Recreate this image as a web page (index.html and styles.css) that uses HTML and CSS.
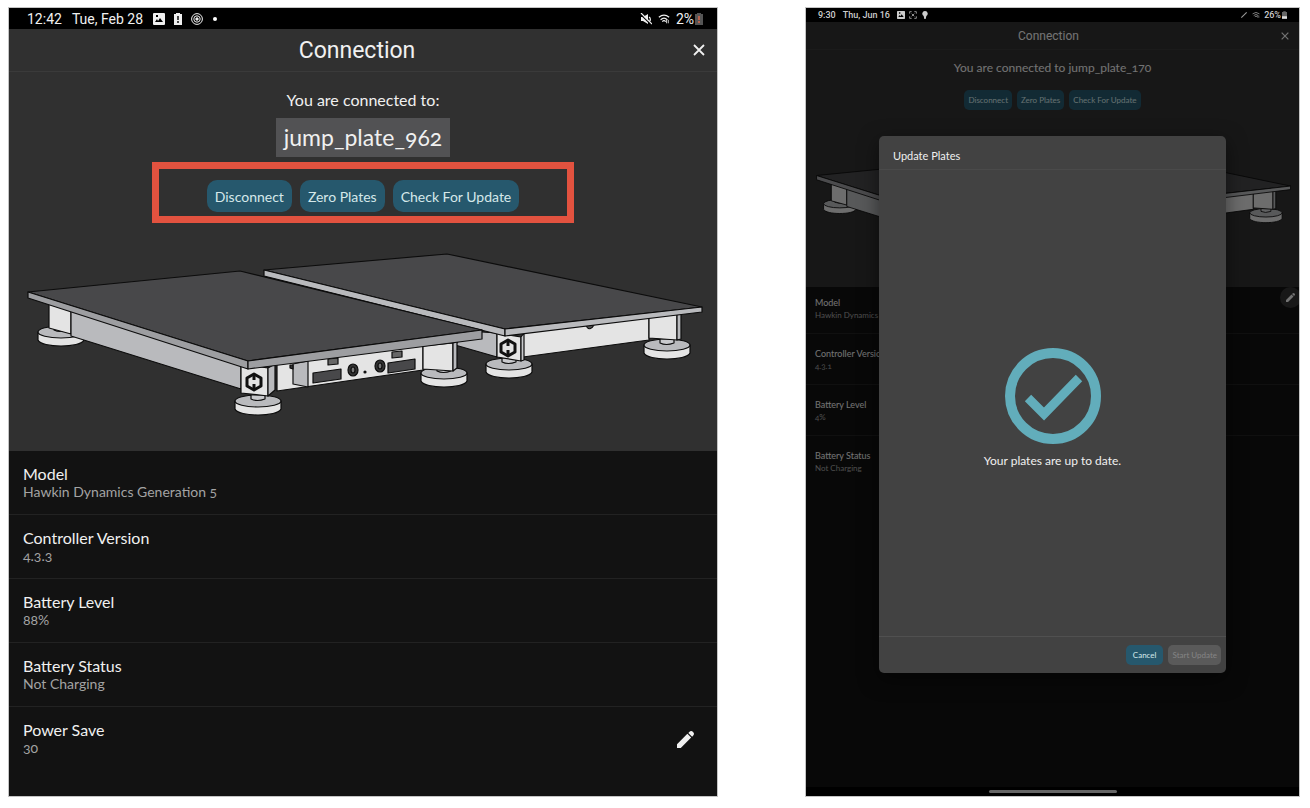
FILE: index.html
```
<!DOCTYPE html>
<html lang="en">
<head>
  <meta charset="UTF-8" />
  <meta name="viewport" content="width=device-width, initial-scale=1.0"/>
  <title>Connection</title>
  <link rel="stylesheet" href="styles.css">
</head>
<body>
  <!-- shared drawings -->
  <svg class="defs" width="0" height="0" aria-hidden="true">
    <symbol id="foot" viewBox="-25 -10 50 24" overflow="visible">
      <path d="M-23 0v8c3 8 43 8 46 0v-8z" fill="#e4e4e4"/>
      <ellipse rx="23" ry="6" fill="#b9babd"/>
      <path d="M-7 -6v4q6 3 14 0v-4z" fill="#c9cacd"/>
    </symbol>
    <symbol id="hex" viewBox="-10 -10 20 20" overflow="visible">
      <path d="M0-8l7 4v8l-7 4l-7-4v-8z" fill="none" stroke="#111" stroke-width="3"/>
      <path d="M0-7v5M0 2v5" fill="none" stroke="#111" stroke-width="3"/>
    </symbol>
    <g id="plates" stroke="#0c0c0c" stroke-width="1.2" stroke-linejoin="round">
      <!-- right plate -->
      <use href="#foot" x="484" y="354" width="50" height="24"/>
      <use href="#foot" x="642" y="335" width="50" height="24"/>
      <path d="M455 345l42 12v-24l-30-2z" fill="#b9babd"/>
      <path d="M523 330l126-14v24l-126 17z" fill="#e4e4e4"/>
      <path d="M586 326q4 6 8-1" fill="#555"/>
      <path d="M649 317l28-5v28l-28-2z" fill="#e4e4e4"/>
      <path d="M677 312l4 0v27l-4 1z" fill="#b9babd"/>
      <path d="M497 333l24 4v24l-24-4z" fill="#e4e4e4"/>
      <path d="M521 337l3-4v27l-3 1z" fill="#c9cacd"/>
      <path d="M264 270l183-16 255 53-197 22z" fill="#48484a"/>
      <path d="M264 270l241 59v7l-241-60z" fill="#b9babd"/>
      <path d="M505 329l197-22v5l-197 24z" fill="#b9babd"/>
      <use href="#hex" x="498" y="338" width="20" height="20"/>
      <!-- left plate -->
      <use href="#foot" x="36" y="322" width="50" height="24"/>
      <use href="#foot" x="419" y="363" width="50" height="24"/>
      <use href="#foot" x="233" y="391" width="50" height="24"/>
      <path d="M49 303l22 6v25l-22-6z" fill="#e4e4e4"/>
      <path d="M71 310l170 54v25l-170-53z" fill="#b9babd"/>
      <path d="M277 362l146-17v25l-146 21z" fill="#e4e4e4"/>
      <path d="M293 364l15-3v26l-15-3z" fill="#b9babd"/>
      <path d="M290 365l3 0v4l-3-1z" fill="#333"/>
      <path d="M328 359l10-1v6l-10 1zM392 352l10-1v6l-10 1z" fill="#666"/>
      <path d="M313 373l28-4v10l-28 4zM388 363l27-4v10l-27 4z" fill="#48484a"/>
      <ellipse cx="353" cy="370" rx="5" ry="6" fill="#333"/>
      <ellipse cx="353" cy="370" rx="2" ry="3" fill="#777"/>
      <ellipse cx="380" cy="366" rx="5" ry="6" fill="#333"/>
      <ellipse cx="380" cy="366" rx="2" ry="3" fill="#777"/>
      <circle cx="365" cy="372" r="1"/>
      <path d="M423 346l30-3v28l-30-2z" fill="#e4e4e4"/>
      <path d="M453 343l4-1v26l-4 3z" fill="#b9babd"/>
      <path d="M241 364l27 4v28l-27-3z" fill="#e4e4e4"/>
      <path d="M268 368l7-4v26l-7 6z" fill="#b9babd"/>
      <path d="M28 292l212-21 242 59-234 31z" fill="#48484a"/>
      <path d="M28 292l220 69v8l-220-71z" fill="#9d9ea1"/>
      <path d="M248 361l234-31v9l-234 30z" fill="#9d9ea1"/>
      <use href="#hex" x="244" y="372" width="20" height="20"/>
    </g>
    <symbol id="photo" viewBox="0 0 12 12">
      <path d="M1 0h10a1 1 0 0 1 1 1v10a1 1 0 0 1-1 1H1a1 1 0 0 1-1-1V1a1 1 0 0 1 1-1zM2 9h8L7 5 5 8 4 6zM3 2v2h2V2z" fill="currentColor" fill-rule="evenodd"/>
    </symbol>
    <symbol id="wifi" viewBox="0 0 14 12">
      <path d="M1 4q6-5 12 0M3 7q4-4 8 0M5 9q2-2 4 0" fill="none" stroke="currentColor" stroke-width="1.4"/>
      <path d="M10 7v4M12 7v4" stroke="currentColor"/>
    </symbol>
    <symbol id="close" viewBox="0 0 12 12">
      <path d="M1 1l10 10M11 1L1 11" stroke="currentColor" stroke-width="1.8"/>
    </symbol>
    <symbol id="pencil" viewBox="0 0 18 18">
      <path d="M0 18v-4L11 3l4 4L4 18zM12 2l1-1q2-2 4 0t0 4l-1 1z" fill="currentColor"/>
    </symbol>
  </svg>

  <section class="tablet">
    <div class="status">
      <span>12:42</span>
      <span>Tue, Feb 28</span>
      <svg class="status-icon"><use href="#photo"/></svg>
      <svg class="status-icon" viewBox="0 0 12 12"><path d="M4 0h4v1h2v11H2V1h2z" fill="currentColor"/><path d="M6 3v4M6 8v2" stroke="#000" stroke-width="1.4"/></svg>
      <svg class="status-icon" viewBox="0 0 12 12" fill="none" stroke="currentColor"><circle cx="6" cy="6" r="5.4"/><circle cx="6" cy="6" r="3.2"/><circle cx="6" cy="6" r="1.2" fill="currentColor"/></svg>
      <span class="dot"></span>
      <div class="status-right">
        <svg class="status-icon" viewBox="0 0 12 12"><path d="M1 4h2l5-3v10L3 8H1z" fill="currentColor"/><path d="M0 1l11 10.500" stroke="#000" stroke-width="1.2"/><path d="M1 0l11 11M9 4q2 1 1 4" fill="none" stroke="currentColor" stroke-width="1.2"/></svg>
        <svg class="status-icon"><use href="#wifi"/></svg>
        <span class="level">2%<svg class="battery" viewBox="0 0 8 12"><path d="M2 0h4v1h2v11H0V1h2z" fill="#555"/><path d="M4 3v4M4 8v2" stroke="#d0654a" stroke-width="1.6"/></svg></span>
      </div>
    </div>
    <header class="title-bar">
      <h1>Connection</h1>
      <button class="close" aria-label="Close"><svg><use href="#close"/></svg></button>
    </header>
    <div class="hero">
      <p class="connected">You are connected to:</p>
      <p class="plate-name">jump_plate_962</p>
      <div class="actions marked">
        <button class="btn">Disconnect</button>
        <button class="btn">Zero Plates</button>
        <button class="btn">Check For Update</button>
      </div>
      <svg class="drawing" viewBox="9 223 708 228" role="img" aria-label="Force plates"><use href="#plates"/></svg>
    </div>
    <ul class="info">
      <li><div><h2>Model</h2><p>Hawkin Dynamics Generation 5</p></div></li>
      <li><div><h2>Controller Version</h2><p>4.3.3</p></div></li>
      <li><div><h2>Battery Level</h2><p>88%</p></div></li>
      <li><div><h2>Battery Status</h2><p>Not Charging</p></div></li>
      <li><div><h2>Power Save</h2><p>30</p></div>
        <button class="edit" aria-label="Edit power save"><svg><use href="#pencil"/></svg></button></li>
    </ul>
  </section>

  <section class="tablet small">
    <div class="status">
      <span>9:30</span>
      <span>Thu, Jun 16</span>
      <svg class="status-icon"><use href="#photo"/></svg>
      <svg class="status-icon" viewBox="0 0 12 12" fill="none" stroke="#999" stroke-width="1.4"><path d="M1 4V1h3M8 1h3v3M11 8v3H8M4 11H1V8M4 4l4 4M8 4L4 8"/></svg>
      <svg class="status-icon" viewBox="0 0 12 12" fill="currentColor"><path d="M6 0a4 4 0 0 1 2 7.500L7 12H5L4 7.500A4 4 0 0 1 6 0z"/></svg>
      <div class="status-right">
        <svg class="status-icon" viewBox="0 0 12 12"><path d="M2 10l8-8" stroke="#999" stroke-width="1.6"/></svg>
        <svg class="status-icon muted"><use href="#wifi"/></svg>
        <span class="level">26%<svg class="battery" viewBox="0 0 8 12"><path d="M2 0h4v1h2v11H0V1h2z" fill="#666"/><path d="M0 8h8v4H0z" fill="#ddd"/></svg></span>
      </div>
    </div>
    <header class="title-bar">
      <h1>Connection</h1>
      <button class="close" aria-label="Close"><svg><use href="#close"/></svg></button>
    </header>
    <div class="hero">
      <p class="connected">You are connected to jump_plate_170</p>
      <div class="actions">
        <button class="btn">Disconnect</button>
        <button class="btn">Zero Plates</button>
        <button class="btn">Check For Update</button>
      </div>
      <svg class="drawing" viewBox="13 223 701 228" role="img" aria-label="Force plates"><use href="#plates"/></svg>
    </div>
    <ul class="info">
      <li><div><h2>Model</h2><p>Hawkin Dynamics Generation 5</p></div>
        <button class="edit" aria-label="Edit model"><svg><use href="#pencil"/></svg></button></li>
      <li><div><h2>Controller Version</h2><p>4.3.1</p></div></li>
      <li><div><h2>Battery Level</h2><p>4%</p></div></li>
      <li><div><h2>Battery Status</h2><p>Not Charging</p></div></li>
    </ul>
    <div class="nav-bar"><span></span></div>

    <div class="overlay">
      <div class="dialog" role="dialog" aria-label="Update Plates">
        <h2 class="dialog-title">Update Plates</h2>
        <div class="dialog-body">
          <svg class="check" viewBox="0 0 96 96" fill="none" stroke="#62adbb">
            <circle cx="48" cy="48" r="43" stroke-width="10"/>
            <path d="M23 50l16 16L74 30" stroke-width="9"/>
          </svg>
          <p>Your plates are up to date.</p>
        </div>
        <div class="dialog-footer">
          <button class="btn cancel">Cancel</button>
          <button class="btn" disabled>Start Update</button>
        </div>
      </div>
    </div>
  </section>
</body>
</html>
```
FILE: styles.css
```
* {
  box-sizing: border-box;
}
body {
  margin: 0;
  padding: 8px 11px 12px 9px;
  min-height: 100vh;
  display: grid;
  grid-template-columns: 708fr 493fr;
  column-gap: 89px;
  background: #fff;
  color: #f0f0f0;
  font-family: Lato, sans-serif;
  font-variant-numeric: oldstyle-nums;
}
h1, h2, p, ul {
  margin: 0;
  padding: 0;
  font-weight: 400;
}
button {
  border: none;
  font-family: inherit;
  color: inherit;
  cursor: pointer;
}
.defs {
  position: absolute;
}
.tablet {
  position: relative;
  display: flex;
  flex-direction: column;
  min-width: 0;
  background: #121212;
  box-shadow: 0 0 0 1px #c4c4c4;
}

/* status bar */
.status {
  display: flex;
  align-items: center;
  gap: 10px;
  height: 21px;
  padding: 0 14px 0 18px;
  background: #000;
  font-family: Roboto, sans-serif;
  font-size: 14px;
  font-variant-numeric: normal;
}
.status-icon {
  width: 12px;
  height: 12px;
}
.status-icon + .status-icon {
  margin-left: -3px;
}
.status .dot {
  width: 4px;
  height: 4px;
  border-radius: 50%;
  background: #fff;
}
.status-right {
  display: flex;
  align-items: center;
  gap: 6px;
  margin-left: auto;
}
.status-right .status-icon {
  margin: 0;
}
.level {
  display: flex;
  align-items: center;
}
.battery {
  width: 8px;
  height: 12px;
  margin-left: 1px;
}

/* title */
.title-bar {
  display: flex;
  align-items: center;
  height: 43px;
  padding: 0 12px;
  background: #303030;
  border-bottom: 1px solid #3a3a3a;
}
.title-bar h1 {
  flex: 1;
  text-align: center;
  font-family: Roboto, sans-serif;
  font-size: 23px;
}
.close {
  padding: 0;
  background: none;
}
.close svg {
  display: block;
  width: 12px;
  height: 12px;
}

/* connection block */
.hero {
  display: flex;
  flex-direction: column;
  align-items: center;
  padding-top: 18px;
  background: #303030;
}
.connected {
  font-size: 16px;
  line-height: 20px;
}
.plate-name {
  margin: 8px 0 5px;
  padding: 0 8px;
  background: #525254;
  font-size: 23px;
  line-height: 39px;
}
.actions {
  display: flex;
  justify-content: center;
  gap: 8px;
}
.marked {
  width: 422px;
  padding: 11px 0 4px;
  border: 7px solid #e2523f;
}
.btn {
  height: 32px;
  padding: 0 8px;
  border-radius: 10px;
  background: #26586d;
  font-size: 14px;
  color: #d5e8ea;
}
.drawing {
  display: block;
  width: 100%;
}

/* details list */
.info {
  list-style: none;
}
.info li {
  display: flex;
  align-items: center;
  justify-content: space-between;
  padding: 14px 23px 13px 14px;
  border-bottom: 1px solid #222;
}
.info li:last-child {
  border-bottom: none;
}
.info h2 {
  font-size: 16px;
  line-height: 18px;
}
.info p {
  font-size: 14px;
  line-height: 18px;
  color: #a3a3a3;
}
.edit {
  padding: 0;
  background: none;
}
.edit svg {
  display: block;
  width: 17px;
  height: 17px;
}

/* second tablet, smaller scale */
.small .status {
  position: relative;
  z-index: 2;
  height: 14px;
  gap: 7px;
  padding: 0 12px;
  font-size: 9px;
  font-weight: 500;
  color: #ccc;
}
.small .status-icon {
  width: 8px;
  height: 8px;
}
.small .status-icon + .status-icon {
  margin-left: -3px;
}
.small .status-right {
  gap: 4px;
}
.small .status-right .status-icon {
  margin: 0;
}
.small .muted {
  color: #999;
}
.small .battery {
  width: 5px;
  height: 8px;
}
.small .title-bar {
  height: 28px;
  padding: 0 10px;
}
.small .title-bar h1 {
  font-size: 12px;
}
.small .close svg {
  width: 8px;
  height: 8px;
}
.small .connected {
  font-size: 12px;
  line-height: 16px;
  margin-bottom: 14px;
}
.small .hero {
  padding-top: 10px;
}
.small .actions {
  gap: 5px;
  margin-bottom: 17px;
}
.small .btn {
  height: 20px;
  padding: 0 4px;
  border-radius: 5px;
  font-size: 8px;
}
.small .info {
  overflow: hidden;
}
.small .info li {
  position: relative;
  padding: 14px 9px 12px;
}
.small .info li:first-child {
  padding-top: 10px;
}
.small .info h2 {
  font-size: 9px;
  line-height: 12px;
}
.small .info p {
  font-size: 8px;
  line-height: 12px;
}
.small .edit {
  position: absolute;
  top: 0;
  right: -2px;
  padding: 6px;
  border-radius: 50%;
  background: #333;
}
.small .edit svg {
  width: 9px;
  height: 9px;
}
.nav-bar {
  position: relative;
  z-index: 2;
  display: flex;
  justify-content: center;
  margin-top: auto;
  padding: 3px;
  height: 9px;
  background: #000;
}
.nav-bar span {
  width: 128px;
  height: 3px;
  border-radius: 2px;
  background: #666;
}

/* update dialog */
.overlay {
  position: absolute;
  inset: 0;
  display: flex;
  align-items: center;
  justify-content: center;
  padding-top: 5px;
  background: rgba(0, 0, 0, 0.52);
}
.dialog {
  display: flex;
  flex-direction: column;
  width: 70.4%;
  height: 68.6%;
  border-radius: 5px;
  background: #424242;
  box-shadow: 0 6px 20px rgba(0, 0, 0, 0.5);
}
.dialog-title {
  padding: 10px 14px;
  border-bottom: 1px solid #4a4a4a;
  font-size: 11px;
  line-height: 20px;
  height: 34px;
}
.dialog-body {
  flex: 1;
  display: flex;
  flex-direction: column;
  align-items: center;
  justify-content: center;
  gap: 8px;
  padding-top: 12px;
  font-size: 12px;
  line-height: 18px;
}
.check {
  width: 96px;
  height: 96px;
}
.dialog-footer {
  display: flex;
  align-items: center;
  justify-content: flex-end;
  gap: 5px;
  height: 37px;
  padding: 0 5px;
  border-top: 1px solid #505050;
}
.dialog-footer .cancel {
  padding: 0 7px;
}
.dialog-footer .btn:disabled {
  background: #5a5a5a;
  color: #858585;
}
```
